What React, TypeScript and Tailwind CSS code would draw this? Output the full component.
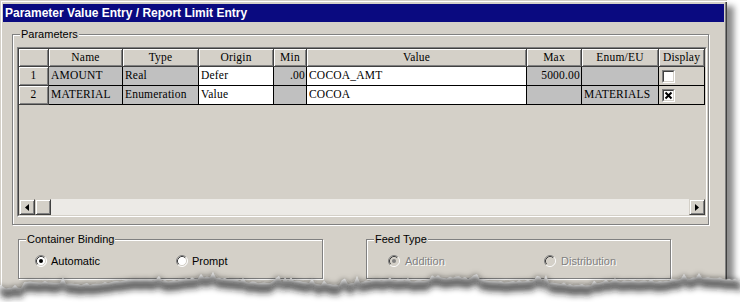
import React from 'react';

type Col = { label: string; w: string; bg: string; right?: boolean };

const cols: Col[] = [
  { label: 'Name', w: 'w-[74px]', bg: 'bg-[#c0c0c0]' },
  { label: 'Type', w: 'w-[76px]', bg: 'bg-[#c0c0c0]' },
  { label: 'Origin', w: 'w-[75px]', bg: 'bg-white' },
  { label: 'Min', w: 'w-[33px]', bg: 'bg-[#c0c0c0]', right: true },
  { label: 'Value', w: 'w-[220px]', bg: 'bg-white' },
  { label: 'Max', w: 'w-[55px]', bg: 'bg-[#c0c0c0]', right: true },
  { label: 'Enum/EU', w: 'w-[77px]', bg: 'bg-[#c0c0c0]' },
  { label: 'Display', w: 'w-[46px]', bg: 'bg-[#d4d0c8]' },
];

const rows = [
  { cells: ['AMOUNT', 'Real', 'Defer', '.00', 'COCOA_AMT', '5000.00', ''], checked: false },
  { cells: ['MATERIAL', 'Enumeration', 'Value', '', 'COCOA', '', 'MATERIALS'], checked: true },
];

const raised =
  'border-r border-b border-[#404040] shadow-[inset_1px_1px_0_#fff,inset_-1px_-1px_0_#808080] bg-[#d4d0c8]';

const btn =
  'w-[16px] h-[16px] shrink-0 flex items-center justify-center bg-[#d4d0c8] border border-t-[#d4d0c8] border-l-[#d4d0c8] border-b-[#404040] border-r-[#404040] shadow-[inset_1px_1px_0_#fff,inset_-1px_-1px_0_#808080]';

function Checkbox({ checked }: { checked: boolean }) {
  return (
    <div className="w-[13px] h-[13px] border border-t-[#808080] border-l-[#808080] border-b-white border-r-white">
      <div className="w-full h-full bg-white border border-t-[#404040] border-l-[#404040] border-b-[#d4d0c8] border-r-[#d4d0c8] flex items-center justify-center">
        {checked && (
          <svg width="9" height="9" viewBox="0 0 9 9">
            <path d="M1.5 1.5 L7.5 7.5 M7.5 1.5 L1.5 7.5" stroke="#000" strokeWidth="2" />
          </svg>
        )}
      </div>
    </div>
  );
}

function Radio({ checked, disabled }: { checked: boolean; disabled?: boolean }) {
  return (
    <svg width="12" height="12" viewBox="0 0 12 12" className="shrink-0">
      <circle cx="6" cy="6" r="5" fill={disabled ? '#d4d0c8' : '#fff'} />
      <path d="M2.11 9.89 A5.5 5.5 0 0 1 9.89 2.11" stroke="#808080" fill="none" />
      <path d="M9.89 2.11 A5.5 5.5 0 0 1 2.11 9.89" stroke="#fff" fill="none" />
      <path d="M2.82 9.18 A4.5 4.5 0 0 1 9.18 2.82" stroke="#404040" fill="none" />
      <path d="M9.18 2.82 A4.5 4.5 0 0 1 2.82 9.18" stroke="#d4d0c8" fill="none" />
      {checked && <circle cx="6" cy="6" r="2" fill={disabled ? '#808080' : '#000'} />}
    </svg>
  );
}

function GroupLabel({ text }: { text: string }) {
  return (
    <span className="absolute -top-[7px] left-[7px] bg-[#d4d0c8] px-[1px] leading-[13px] text-[11px] text-black">
      {text}
    </span>
  );
}

// jagged torn-paper bottom edge
const tear = (() => {
  let seed = 11;
  const rnd = () => {
    seed = (seed * 9301 + 49297) % 233280;
    return seed / 233280;
  };
  const pts: [number, number][] = [];
  for (let x = 0; x <= 742; x += 3) {
    let y = 17 + 2.5 * Math.sin(x / 41) + 1.5 * Math.sin(x / 13 + 1) + rnd() * 2 - 1;
    if (x < 24) y += 5;
    if (rnd() > 0.86) y -= 2 + rnd() * 4;
    pts.push([x, y]);
  }
  return pts;
})();

export default function App() {
  const line = tear.map(([x, y]) => `${x},${y.toFixed(1)}`).join(' ');
  const shadow = tear.map(([x, y]) => `${x},${(y + 1).toFixed(1)}`).join(' ');
  const shadowBottom = [...tear].reverse().map(([x, y]) => `${x},${(y + 10).toFixed(1)}`).join(' ');

  return (
    <div className="relative w-[740px] h-[302px] bg-white overflow-hidden font-['Liberation_Sans',Arial,sans-serif]">
      <div className="w-[727px] h-[302px] bg-[#d4d0c8] pl-[3px] pr-[3px] pt-[4px] shadow-[inset_1px_1px_0_#d4d0c8,inset_2px_2px_0_#fff,inset_-1px_0_0_#404040,inset_-2px_0_0_#808080,7px_6px_6px_rgba(0,0,0,0.45)]">
        <div className="h-[18px] bg-[#0a0a80] pl-[2px] text-white font-bold text-[12px] leading-[18px] whitespace-nowrap">
          Parameter Value Entry / Report Limit Entry
        </div>

        <div className="ml-[9px] mr-[15px]">
          {/* Parameters group */}
          <div className="relative mt-[12px] h-[191px] border border-[#808080] shadow-[inset_1px_1px_0_#fff,1px_1px_0_#fff] pt-[12px] pl-[4px] pr-[4px] pb-[7px] flex">
            <GroupLabel text="Parameters" />
            <div className="flex-1 border border-t-[#808080] border-l-[#808080] border-b-white border-r-white">
              <div className="h-full border border-t-[#404040] border-l-[#404040] border-b-[#d4d0c8] border-r-[#d4d0c8] flex flex-col overflow-hidden font-['Liberation_Serif',serif] text-[11.5px] tracking-[0.2px] text-black">
                {/* header */}
                <div className="flex h-[18px] shrink-0">
                  <div className={`w-[30px] shrink-0 ${raised}`} />
                  {cols.map((c) => (
                    <div key={c.label} className={`${c.w} shrink-0 ${raised} flex items-center justify-center whitespace-nowrap`}>
                      {c.label}
                    </div>
                  ))}
                </div>
                {rows.map((r, i) => (
                  <div key={i} className="flex h-[19px] shrink-0">
                    <div className={`w-[30px] shrink-0 ${raised} flex items-center justify-center`}>{i + 1}</div>
                    {cols.map((c, j) => (
                      <div
                        key={c.label}
                        className={`${c.w} shrink-0 ${c.bg} border-r border-b border-black flex items-center whitespace-nowrap overflow-hidden ${
                          c.right ? 'justify-end pr-[1px]' : 'pl-[2px]'
                        }`}
                      >
                        {j === 7 ? <div className="pl-[1px]"><Checkbox checked={r.checked} /></div> : r.cells[j]}
                      </div>
                    ))}
                  </div>
                ))}
                <div className="flex-1" />
                {/* horizontal scrollbar */}
                <div className="h-[16px] shrink-0 flex bg-[#eceae6]">
                  <div className={btn}>
                    <svg width="4" height="7" viewBox="0 0 4 7">
                      <polygon points="4,0 0,3.5 4,7" fill="#000" />
                    </svg>
                  </div>
                  <div className={btn} />
                  <div className="flex-1" />
                  <div className={btn}>
                    <svg width="4" height="7" viewBox="0 0 4 7">
                      <polygon points="0,0 4,3.5 0,7" fill="#000" />
                    </svg>
                  </div>
                </div>
              </div>
            </div>
          </div>

          {/* bottom groups */}
          <div className="flex gap-[43px] ml-[6px] mt-[14px] text-[11px]">
            <div className="relative w-[305px] h-[40px] border border-[#808080] shadow-[inset_1px_1px_0_#fff,1px_1px_0_#fff] pl-[16px] pt-[13px]">
              <GroupLabel text="Container Binding" />
              <div className="flex items-center">
                <div className="w-[141px] flex items-center gap-[4px]">
                  <Radio checked />
                  <span>Automatic</span>
                </div>
                <div className="flex items-center gap-[4px]">
                  <Radio checked={false} />
                  <span>Prompt</span>
                </div>
              </div>
            </div>
            <div className="relative w-[305px] h-[40px] border border-[#808080] shadow-[inset_1px_1px_0_#fff,1px_1px_0_#fff] pl-[21px] pt-[13px]">
              <GroupLabel text="Feed Type" />
              <div className="flex items-center text-[#808080] [text-shadow:1px_1px_0_#fff]">
                <div className="w-[156px] flex items-center gap-[5px]">
                  <Radio checked disabled />
                  <span>Addition</span>
                </div>
                <div className="flex items-center gap-[5px]">
                  <Radio checked={false} disabled />
                  <span>Distribution</span>
                </div>
              </div>
            </div>
          </div>
        </div>
      </div>

      {/* torn edge */}
      <svg className="absolute left-0 top-[264px]" width="740" height="38" viewBox="0 0 740 38">
        <defs>
          <filter id="blur" x="-5%" y="-50%" width="110%" height="200%">
            <feGaussianBlur stdDeviation="3" />
          </filter>
        </defs>
        <polygon points={`0,42 ${line} 742,42`} fill="#fff" />
        <polygon points={`${shadow} ${shadowBottom}`} fill="rgba(30,30,30,0.75)" filter="url(#blur)" />
      </svg>
    </div>
  );
}
